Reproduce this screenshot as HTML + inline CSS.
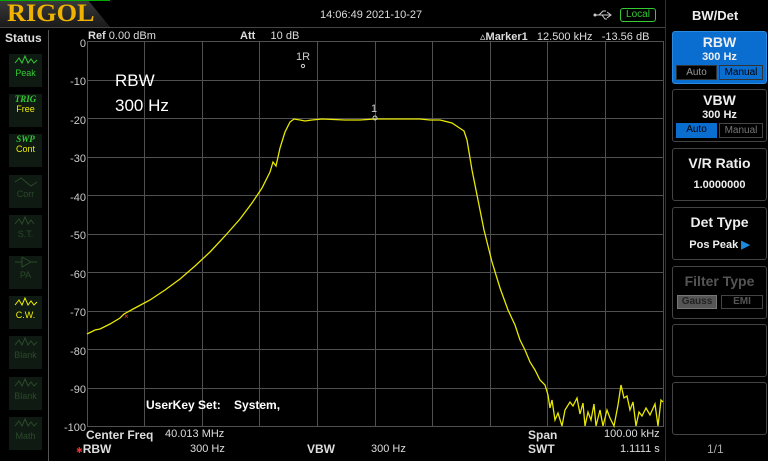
<!DOCTYPE html>
<html><head><meta charset="utf-8"><style>
*{margin:0;padding:0;box-sizing:border-box}
body{width:768px;height:461px;background:#000;overflow:hidden;position:relative;font-family:"Liberation Sans",sans-serif;color:#ddd}
.a{position:absolute;white-space:nowrap}
.sb{position:absolute;left:9px;width:33px;height:33px;background:#0f1a12;text-align:center;font-size:9px;line-height:10px}
.btn{position:absolute;left:672px;width:95px;border:1px solid #444;border-radius:3px;text-align:center;color:#eee;font-weight:bold}
.t{font-size:14px}
</style></head><body>
<div class="a" style="left:0;top:0;width:110px;height:27px;background:linear-gradient(#3a3a3a,#1a1a1a);clip-path:polygon(0 0,88px 0,110px 27px,0 27px)"></div>
<div class="a" style="left:0;top:0;width:110px;height:1px;background:#0a0"></div>
<div class="a" style="left:7px;top:0px;font-family:'Liberation Serif',serif;font-weight:bold;font-size:25px;color:#f0b400;transform:scaleX(1.05);transform-origin:left">RIGOL</div>
<div class="a" style="left:0;top:27px;width:665px;height:1px;background:#444"></div>
<div class="a" style="left:665px;top:0;width:1px;height:461px;background:#333"></div>
<div class="a" style="left:48px;top:30px;width:1px;height:431px;background:#555"></div>
<div class="a" style="left:320px;top:9px;font-size:11px;color:#ddd">14:06:49 2021-10-27</div>
<svg class="a" style="left:593px;top:9px" width="22" height="12"><path d="M1 6 H18 M14 3 L18 6 L14 9 M6 6 L10 2 H13 M9 6 L12 10 H14" stroke="#ccc" fill="none"/><circle cx="2" cy="6" r="1.5" fill="#ccc"/></svg>
<div class="a" style="left:620px;top:8px;width:36px;height:14px;border:1px solid #3c3;border-radius:3px;color:#3c3;font-size:10px;text-align:center;line-height:12px">Local</div>
<div class="a" style="left:5px;top:31px;font-size:12px;font-weight:bold;color:#ddd">Status</div>
<div class="sb" style="top:54px;color:#3c3"><svg width="26" height="12"><path d="M2 9 L6 4 L9 9 L12 2 L15 9 L18 5 L21 9 L24 6" stroke="#3c3" fill="none"/></svg><br>Peak</div>
<div class="sb" style="top:94px;color:#ee0"><i style="color:#3c3;font-family:'Liberation Serif';font-weight:bold">TRIG</i><br>Free</div>
<div class="sb" style="top:134px;color:#ee0"><i style="color:#3c3;font-family:'Liberation Serif';font-weight:bold">SWP</i><br>Cont</div>
<div class="sb" style="top:175px;color:#2a4a2a"><svg width="26" height="12"><path d="M2 7 L8 3 L13 7 L18 11 L24 7" stroke="#2a4a2a" fill="none"/></svg><br>Corr</div>
<div class="sb" style="top:215px;color:#2a4a2a"><svg width="26" height="12"><path d="M2 9 L6 4 L9 9 L12 2 L15 9 L18 5 L21 9" stroke="#2a4a2a" fill="none"/></svg><br>S.T.</div>
<div class="sb" style="top:256px;color:#2a4a2a"><svg width="26" height="12"><path d="M2 6 H9 M9 1 V11 L18 6 L9 1 M18 6 H24" stroke="#2a4a2a" fill="none"/></svg><br>PA</div>
<div class="sb" style="top:296px;color:#ee0"><svg width="26" height="12"><path d="M2 9 L6 4 L9 9 L12 2 L15 9 L18 5 L21 9 L24 6" stroke="#ee0" fill="none"/></svg><br>C.W.</div>
<div class="sb" style="top:336px;color:#2a4a2a"><svg width="26" height="12"><path d="M2 9 L6 4 L9 9 L12 2 L15 9 L18 5 L21 9 L24 6" stroke="#2a4a2a" fill="none"/></svg><br>Blank</div>
<div class="sb" style="top:377px;color:#2a4a2a"><svg width="26" height="12"><path d="M2 9 L6 4 L9 9 L12 2 L15 9 L18 5 L21 9 L24 6" stroke="#2a4a2a" fill="none"/></svg><br>Blank</div>
<div class="sb" style="top:417px;color:#2a4a2a"><svg width="26" height="12"><path d="M2 9 L6 4 L9 9 L12 2 L15 9 L18 5 L21 9 L24 6" stroke="#2a4a2a" fill="none"/></svg><br>Math</div>
<div class="a" style="left:88px;top:30px;font-size:11px"><b>Ref</b> 0.00 dBm</div>
<div class="a" style="left:240px;top:30px;font-size:11px"><b>Att</b> &nbsp;&nbsp;&nbsp;&nbsp;10 dB</div>
<div class="a" style="left:480px;top:30px;font-size:11px">▵<b>Marker1</b> &nbsp;&nbsp;12.500 kHz &nbsp;&nbsp;-13.56 dB</div>
<svg class="a" style="left:0;top:0" width="665" height="461">
<g stroke="#505050" stroke-width="1" fill="none">
<path d="M87.5 41V426M144.5 41V426M202.5 41V426M259.5 41V426M317.5 41V426M375.5 41V426M432.5 41V426M490.5 41V426M547.5 41V426M605.5 41V426M663.5 41V426"/>
<path d="M87 41.5H664M87 80.5H664M87 118.5H664M87 157.5H664M87 195.5H664M87 234.5H664M87 272.5H664M87 311.5H664M87 349.5H664M87 388.5H664M87 426.5H664"/>
</g>
<g fill="#ccc" font-size="11" text-anchor="end" font-family="Liberation Sans">
<text x="86" y="47">0</text><text x="86" y="85">-10</text><text x="86" y="124">-20</text><text x="86" y="162">-30</text><text x="86" y="201">-40</text><text x="86" y="239">-50</text><text x="86" y="278">-60</text><text x="86" y="316">-70</text><text x="86" y="355">-80</text><text x="86" y="393">-90</text><text x="86" y="431">-100</text>
</g>
<path d="M87 334 L95 330 L100 329 L110 324 L120 318 L124 314 L135 308 L150 300 L165 290 L180 279 L195 266 L210 252 L225 236 L240 219 L252 203 L262 188 L270 172 L273 162 L276 166 L280 148 L285 132 L290 122 L294 119 L300 120 L305 121 L312 120 L322 119 L345 120 L360 120 L375 119 L420 119 L430 120 L440 120 L452 123 L458 127 L464 131 L467 140 L472 170 L478 200 L484 230 L492 262 L500 288 L508 310 L515 325 L520 340 L525 350 L530 362 L535 370 L540 380 L545 385 L548 395 L550 408 L552 400 L555 420 L558 413 L562 426 L565 410 L570 402 L573 406 L577 398 L580 414 L583 403 L585 426 L588 412 L591 420 L594 404 L596 426 L600 410 L603 426 L607 410 L610 418 L614 426 L618 405 L621 385 L624 398 L627 396 L630 410 L633 402 L636 426 L639 412 L642 416 L646 408 L650 415 L655 404 L658 426 L661 400 L663 402" stroke="#e8e800" stroke-width="1.3" fill="none"/>
<text x="124" y="319" fill="#e33" font-size="8">×</text>
<circle cx="375" cy="118" r="2" stroke="#ccc" fill="none"/>
<text x="374" y="112" fill="#ccc" font-size="11" text-anchor="middle">1</text>
<circle cx="303" cy="66" r="1.6" stroke="#ccc" fill="none"/>
<text x="303" y="60" fill="#ccc" font-size="11" text-anchor="middle">1R</text>
</svg>
<div class="a" style="left:115px;top:71px;font-size:17px;color:#fff">RBW</div>
<div class="a" style="left:115px;top:96px;font-size:17px;color:#fff">300 Hz</div>
<div class="a" style="left:146px;top:398px;font-size:12px;font-weight:bold;color:#fff">UserKey Set: &nbsp;&nbsp;&nbsp;System,</div>
<div class="a" style="left:86px;top:428px;font-size:12px"><b>Center Freq</b></div>
<div class="a" style="left:165px;top:428px;font-size:11px">40.013 MHz</div>
<div class="a" style="left:76px;top:442px;font-size:12px"><span style="color:#e33;font-size:8px">✱</span><b>RBW</b></div>
<div class="a" style="left:190px;top:443px;font-size:11px">300 Hz</div>
<div class="a" style="left:307px;top:442px;font-size:12px"><b>VBW</b></div>
<div class="a" style="left:371px;top:443px;font-size:11px">300 Hz</div>
<div class="a" style="left:528px;top:428px;font-size:12px"><b>Span</b></div>
<div class="a" style="left:604px;top:428px;font-size:11px">100.00 kHz</div>
<div class="a" style="left:528px;top:442px;font-size:12px"><b>SWT</b></div>
<div class="a" style="left:620px;top:443px;font-size:11px">1.1111 s</div>
<div class="a" style="left:692px;top:8px;font-size:13px;font-weight:bold;color:#eee">BW/Det</div>
<div class="btn" style="top:31px;height:53px;background:#0a6ed1;border-color:#2a8ae0"><div class="t" style="margin-top:2px">RBW</div><div style="font-size:11px;margin-top:1px">300 Hz</div>
<div style="display:flex;margin:2px 0 0 3px;font-size:10px;font-weight:normal;height:15px;line-height:13px"><span style="width:41px;background:#000;border:1px solid #333;color:#999">Auto</span><span style="width:44px;border:1px solid #333;color:#000;margin-left:2px">Manual</span></div></div>
<div class="btn" style="top:89px;height:53px"><div class="t" style="margin-top:2px">VBW</div><div style="font-size:11px;margin-top:1px">300 Hz</div>
<div style="display:flex;margin:2px 0 0 3px;font-size:10px;font-weight:normal;height:15px;line-height:13px"><span style="width:41px;background:#0a6ed1;color:#000">Auto</span><span style="width:44px;border:1px solid #444;color:#777;margin-left:2px">Manual</span></div></div>
<div class="btn" style="top:148px;height:53px"><div class="t" style="margin-top:6px">V/R Ratio</div><div style="font-size:11px;margin-top:8px">1.0000000</div></div>
<div class="btn" style="top:207px;height:53px"><div class="t" style="margin-top:6px">Det Type</div><div style="font-size:11px;margin-top:8px">Pos Peak <span style="color:#1a8ae0">▶</span></div></div>
<div class="btn" style="top:266px;height:53px;color:#555"><div class="t" style="margin-top:6px">Filter Type</div>
<div style="display:flex;margin:6px 0 0 4px;font-size:10px;height:14px;line-height:12px"><span style="width:40px;background:#555;color:#222;border:1px solid #777">Gauss</span><span style="width:42px;border:1px solid #444;color:#555;margin-left:4px">EMI</span></div></div>
<div class="btn" style="top:324px;height:53px"></div>
<div class="btn" style="top:382px;height:53px"></div>
<div class="a" style="left:707px;top:442px;font-size:12px;color:#aaa">1/1</div>
</body></html>
